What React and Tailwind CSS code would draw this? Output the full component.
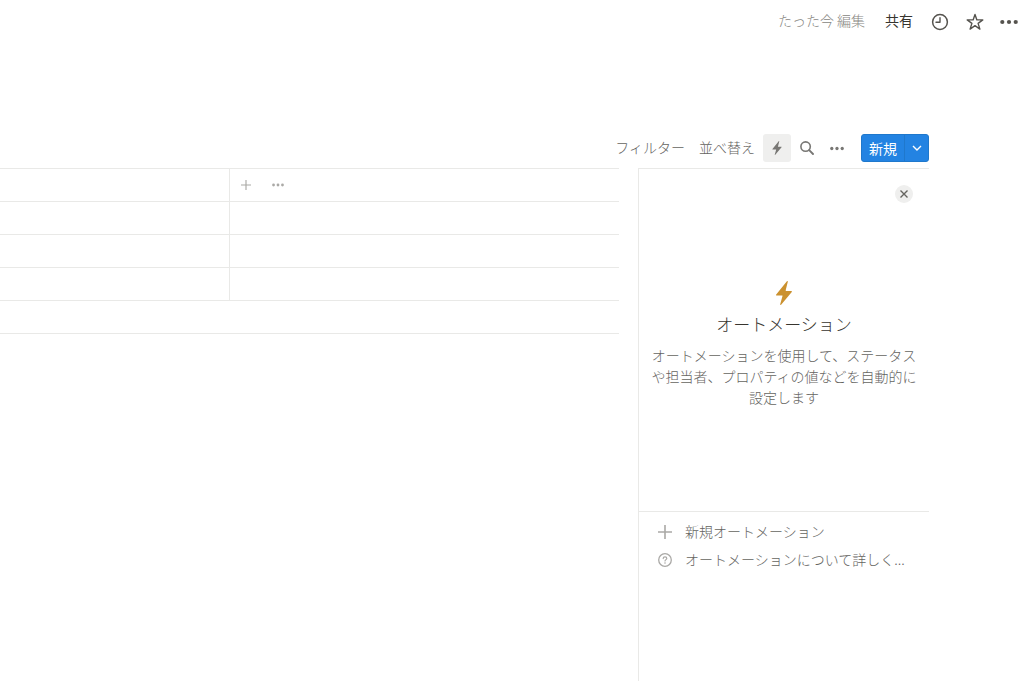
import React from "react";

const rows = [1, 2, 3];

// three dots used in the top bar, the toolbar and the table header
const Dots = ({ className }) => (
  <svg viewBox="0 0 18 6" className={className} fill="currentColor">
    <circle cx="2.3" cy="3" r="2.1" />
    <circle cx="9" cy="3" r="2.1" />
    <circle cx="15.7" cy="3" r="2.1" />
  </svg>
);

const Bolt = ({ className }) => (
  <svg viewBox="0 0 16 24" className={className} fill="currentColor">
    <path d="M10.9.3c.5-.5 1.1-.1.9.5L9.7 9.3c-.1.4.1.6.5.6h5.1c.6 0 .8.5.5 1L5.1 23.7c-.5.5-1.1.1-.9-.5l2.3-8.1c.1-.4-.1-.6-.5-.6H.7c-.6 0-.9-.5-.5-1z" />
  </svg>
);

const Plus = ({ className }) => (
  <svg viewBox="0 0 14 14" className={className} fill="currentColor">
    <path d="M6.2 0h1.6v6.2H14v1.6H7.8V14H6.2V7.8H0V6.2h6.2z" />
  </svg>
);

const TopBar = () => (
  <header className="flex h-11 items-center justify-end pr-px pb-1 text-sm">
    <span className="mr-3 font-light text-[#878682]">たった今 編集</span>
    <button className="px-2">共有</button>
    <div className="ml-0.5 flex items-center text-[#55534e]">
      <button aria-label="更新履歴" className="flex h-9 w-[34px] items-center justify-center pt-1">
        <svg viewBox="0 0 18 18" className="h-[18px] w-[18px]" fill="none" stroke="currentColor">
          <circle cx="9" cy="9" r="7.4" strokeWidth="1.5" />
          <path d="M9 4.7v4.6H5" strokeWidth="1.4" strokeLinecap="round" strokeLinejoin="round" />
        </svg>
      </button>
      <button aria-label="お気に入り" className="flex h-9 w-9 items-center justify-center pt-1">
        <svg viewBox="0 0 18 18" className="h-[18px] w-[18px]" fill="none" stroke="currentColor">
          <path
            d="M9 1.4l1.9 5.5h5.9l-4.7 3.5 1.8 5.7L9 12.7l-4.9 3.4 1.8-5.7L1.2 6.9h5.9z"
            strokeWidth="1.4"
            strokeLinejoin="round"
          />
        </svg>
      </button>
      <button aria-label="その他" className="flex h-9 w-8 items-center justify-center pt-1">
        <Dots className="h-[6px] w-[18px]" />
      </button>
    </div>
  </header>
);

const Toolbar = () => (
  <div className="flex h-10 items-start justify-end text-sm text-[#787774]">
    <button className="h-7 px-[7px] pb-0.5 font-light text-[#65645f]">フィルター</button>
    <button className="h-7 px-[7px] pb-0.5 font-light text-[#65645f]">並べ替え</button>
    <button
      aria-label="オートメーション"
      className="ml-px flex h-7 w-7 items-center justify-center rounded-[3px] bg-[#efefee]"
    >
      <Bolt className="h-[14px] w-[10px]" />
    </button>
    <button aria-label="検索" className="ml-0.5 flex h-7 w-7 items-center justify-center">
      <svg viewBox="0 0 14 14" className="h-[14px] w-[14px]" fill="none" stroke="currentColor">
        <circle cx="5.6" cy="5.6" r="4.7" strokeWidth="1.6" />
        <path d="M9.2 9.2l3.8 3.8" strokeWidth="1.9" strokeLinecap="round" />
      </svg>
    </button>
    <button aria-label="その他" className="ml-0.5 flex h-7 w-7 items-center justify-center">
      <Dots className="h-[5px] w-[14px]" />
    </button>
    <div className="ml-2.5 flex h-7 overflow-hidden rounded-[3px] border border-[#1f78cc] bg-[#2383e2] text-white">
      <button className="px-[7px]">新規</button>
      <button
        aria-label="新規メニュー"
        className="flex w-6 items-center justify-center border-l border-[#1f78cc]"
      >
        <svg viewBox="0 0 10 6" className="h-[6px] w-[10px]" fill="none" stroke="currentColor">
          <path d="M1 .9l4 4 4-4" strokeWidth="1.4" />
        </svg>
      </button>
    </div>
  </div>
);

const Database = () => (
  <table className="w-full table-fixed border-separate border-spacing-0 border-t border-[#e9e9e7]">
    <thead>
      <tr>
        <th className="h-[33px] w-[230px] border-r border-b border-[#e9e9e7] p-0" />
        <th className="h-[33px] border-b border-[#e9e9e7] p-0">
          <div className="flex text-[#aaa9a6]">
            <button aria-label="プロパティを追加" className="flex h-8 w-8 items-center justify-center">
              <Plus className="h-[10px] w-[10px]" />
            </button>
            <button aria-label="プロパティ" className="flex h-8 w-8 items-center justify-center">
              <Dots className="h-[4px] w-[12px]" />
            </button>
          </div>
        </th>
      </tr>
    </thead>
    <tbody>
      {rows.map((row) => (
        <tr key={row}>
          <td className="h-[33px] border-r border-b border-[#e9e9e7] p-0" />
          <td className="h-[33px] border-b border-[#e9e9e7] p-0" />
        </tr>
      ))}
      {/* empty row for adding a new page */}
      <tr>
        <td colSpan={2} className="h-[33px] border-b border-[#e9e9e7] p-0" />
      </tr>
    </tbody>
  </table>
);

const AutomationPanel = () => (
  <aside className="flex w-[291px] shrink-0 flex-col border-t border-l border-[#e9e9e7] font-light text-[#65645f]">
    <section className="border-b border-[#e9e9e7] px-2.5 pb-[103px] text-center">
      <div className="flex justify-end pt-4 pr-1.5">
        <button
          aria-label="閉じる"
          className="flex h-[18px] w-[18px] items-center justify-center rounded-full bg-[#efefee]"
        >
          <svg viewBox="0 0 8 8" className="h-2 w-2" fill="none" stroke="currentColor">
            <path d="M.5.5l7 7m0-7l-7 7" strokeWidth="1.4" />
          </svg>
        </button>
      </div>
      <Bolt className="mx-auto mt-[78px] h-6 w-4 text-[#cb912f]" />
      <h2 className="mt-[7px] text-[17px] leading-6 text-[#37352f]">オートメーション</h2>
      <p className="mt-[9px] text-sm leading-[21px]">
        オートメーションを使用して、ステータスや担当者、プロパティの値などを自動的に設定します
      </p>
    </section>
    <div className="py-1.5 text-sm">
      <button className="flex h-7 w-full items-center px-[19px]">
        <Plus className="mr-[13px] h-[14px] w-[14px] text-[#aaa9a6]" />
        <span className="pb-0.5">新規オートメーション</span>
      </button>
      <a href="#learn" className="flex h-7 items-center px-[19px]">
        <svg viewBox="0 0 14 14" className="mr-[13px] h-[14px] w-[14px] text-[#aaa9a6]" fill="none" stroke="currentColor">
          <circle cx="7" cy="7" r="6.3" strokeWidth="1.3" />
          <path d="M5.2 5.6c0-1.1.8-1.7 1.8-1.7s1.8.6 1.8 1.5c0 1.2-1.8 1.3-1.8 2.6" strokeWidth="1.2" strokeLinecap="round" />
          <circle cx="7" cy="10" r=".8" fill="currentColor" stroke="none" />
        </svg>
        <span className="pb-0.5">オートメーションについて詳しく...</span>
      </a>
    </div>
  </aside>
);

const App = () => {
  return (
    <div className="flex min-h-screen flex-col bg-white font-['Noto_Sans_CJK_JP',sans-serif] text-[#37352f]">
      <TopBar />
      <main className="flex grow flex-col pt-[90px] pr-[97px]">
        <Toolbar />
        {/* the toolbar ends 6px above the table, lines up with the panel */}
        <div className="-mt-1.5 flex grow gap-[19px]">
          <div className="min-w-0 grow">
            <Database />
          </div>
          <AutomationPanel />
        </div>
      </main>
    </div>
  );
};

export default App;
